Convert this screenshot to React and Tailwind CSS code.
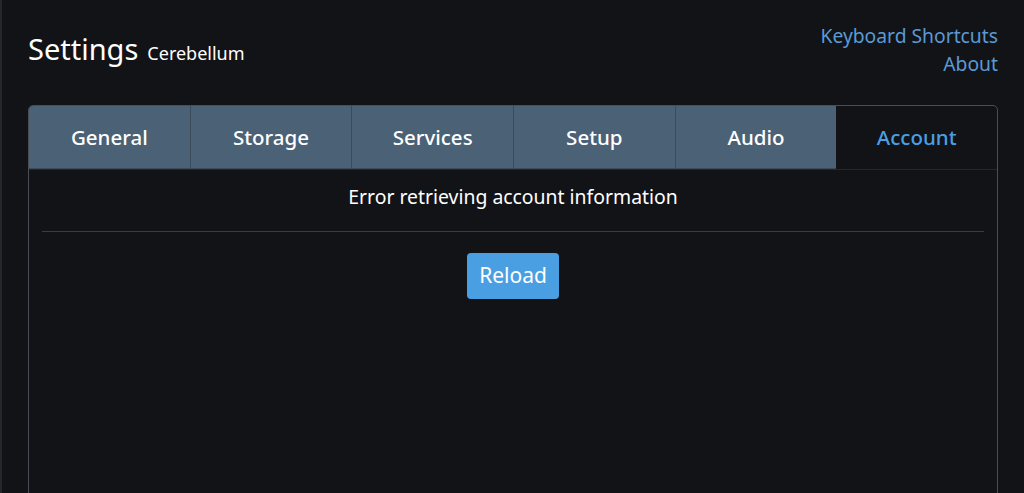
import React, { useState } from 'react';

const tabs = ['General', 'Storage', 'Services', 'Setup', 'Audio', 'Account'];

const SettingsTabs = ({ active, onSelect }) => (
    <div className="flex h-[64px] border-b border-[#23262d]">
        {tabs.map((tab, i) => {
            const isActive = tab === active;
            return (
                <button
                    key={tab}
                    onClick={() => onSelect(tab)}
                    className={
                        'flex-1 flex items-center justify-center text-[20.5px] font-medium ' +
                        (isActive
                            ? 'bg-transparent text-[#4a9fe3]'
                            : 'bg-[#4a6176] text-white border-b border-[#3a4a5a]') +
                        (i > 0 && !isActive ? ' border-l border-[#3a4b5c]' : '') +
                        (i === 0 ? ' rounded-tl-[4px]' : '')
                    }
                >
                    {tab}
                </button>
            );
        })}
    </div>
);

export default function App() {
    const [active, setActive] = useState('Account');

    return (
        <div
            className="min-h-screen h-[493px] overflow-hidden bg-[#121317] border-l-2 border-[#26272c] text-white"
            style={{ fontFamily: '"Noto Sans", "Open Sans", sans-serif' }}
        >
            <div className="flex justify-between pl-[26px] pr-[26px] pt-[22px]">
                <div className="flex items-baseline gap-[9px] pt-[9px]">
                    <h1 className="text-[29px] leading-[36px] text-white">Settings</h1>
                    <span className="text-[18px] text-white">Cerebellum</span>
                </div>
                <div className="flex flex-col items-end text-[19.3px] leading-[28px] text-[#5a9ad6]">
                    <a href="#">Keyboard Shortcuts</a>
                    <a href="#">About</a>
                </div>
            </div>

            <div className="ml-[26px] mr-[26px] mt-[27px] h-[400px] border border-[#4a4d55] rounded-t-[5px]">
                <SettingsTabs active={active} onSelect={setActive} />
                <div className="px-[13px]">
                    <p className="text-center text-[19.4px] leading-[28px] pt-[13px] pb-[20px] border-b border-[#3a3c42]">
                        Error retrieving account information
                    </p>
                    <div className="flex justify-center pt-[21px]">
                        <button className="h-[46px] px-[12px] rounded-[4px] bg-[#4a9fe3] text-white text-[21px]">
                            Reload
                        </button>
                    </div>
                </div>
            </div>
        </div>
    );
}
